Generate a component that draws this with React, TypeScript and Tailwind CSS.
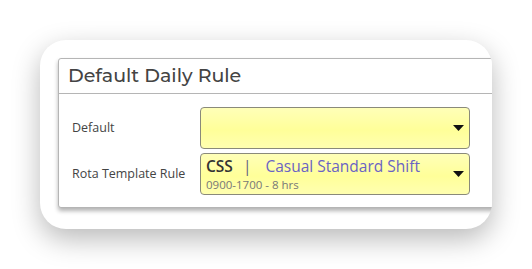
import { Fragment } from 'react'

const ROWS = [
  { label: 'Default', code: '', name: '', detail: '' },
  { label: 'Rota Template Rule', code: 'CSS', name: 'Casual Standard Shift', detail: '0900-1700 - 8 hrs' },
]

function Caret() {
  return (
    <svg width="11" height="6" viewBox="0 0 11 6" className="shrink-0">
      <path d="M0 0 H11 L5.5 6 Z" fill="#111" />
    </svg>
  )
}

export default function App() {
  return (
    <div className="w-[532px] h-[269px] bg-white pt-[40px] pl-[40px] font-['Open_Sans',sans-serif]">
      <div className="w-[452px] h-[189px] rounded-[26px] bg-white overflow-hidden pt-[18px] pl-[18px] shadow-[0_10px_28px_rgba(0,0,0,0.28)]">
        <div className="w-[470px] h-[150px] bg-white border border-[#b5b5b5] rounded-[3px] shadow-[0_3px_4px_rgba(0,0,0,0.3)]">
          <div className="h-[35px] border-b border-[#b5b5b5] pl-[9px] flex items-center">
            <span className="font-['Montserrat','Inter',sans-serif] font-medium text-[19px] text-[#444]">Default Daily Rule</span>
          </div>
          <div className="grid grid-cols-[128px_270px] gap-y-[4px] pl-[13px] pt-[13px] items-center">
            {ROWS.map((row) => (
              <Fragment key={row.label}>
                <span className="text-[12.5px] text-[#444]">{row.label}</span>
                <div className="h-[42px] rounded-[4px] border border-[#8a8a7a] bg-[linear-gradient(#ffffb8,#ffff99_55%,#ffffb0)] flex items-center pr-[5px]">
                  <div className="flex-1 pl-[5px] leading-none">
                    {row.code && (
                      <>
                        <div className="flex items-center text-[15.5px] leading-[21px]">
                          <span className="font-semibold text-[#333]">{row.code}</span>
                          <span className="text-[#5f5f80] pl-[10px] pr-[14px]">|</span>
                          <span className="text-[#6a63c4]">{row.name}</span>
                        </div>
                        <div className="text-[11.5px] text-[#777] leading-[15px]">{row.detail}</div>
                      </>
                    )}
                  </div>
                  <Caret />
                </div>
              </Fragment>
            ))}
          </div>
        </div>
      </div>
    </div>
  )
}
